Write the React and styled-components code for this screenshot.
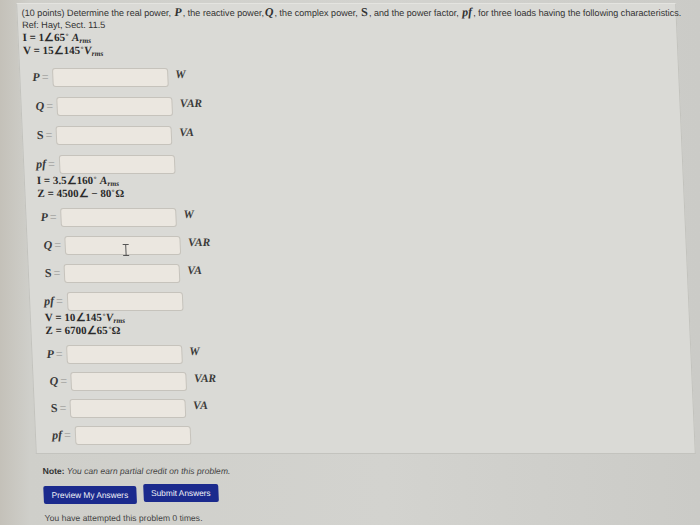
import React from "react";
import styled, { createGlobalStyle } from "styled-components";

const GlobalStyle = createGlobalStyle`
  html, body {
    margin: 0;
    padding: 0;
    height: 100%;
    overflow: hidden;
  }
  body {
    background: linear-gradient(90deg, #c4c1b9 0px, #cfcfca 30px, #d3d3cf 55%, #cbcbc7 100%);
    font-family: "Liberation Sans", Arial, sans-serif;
    color: #2f2f2f;
  }
`;

const Page = styled.div`
  width: 700px;
  height: 525px;
  box-sizing: border-box;
  padding: 3px 24px 0 16px;
  transform: skewX(2.5deg);
  transform-origin: 0 0;
`;

const Panel = styled.div`
  position: relative;
  border: 1px solid #c3c3be;
  border-top-color: #e4e4e0;
  background: #dadad6;
  padding: 3px 0 8px 4px;
  box-sizing: border-box;
`;

const Intro = styled.div`
  font-size: 9.2px;
  line-height: 12px;
  color: #333;
  white-space: nowrap;
  letter-spacing: -0.05px;
`;

const MathInline = styled.span`
  font-family: "Liberation Serif", "Times New Roman", serif;
  font-size: 12px;
  line-height: 0;
  font-weight: bold;
  font-style: ${(p) => (p.$italic ? "italic" : "normal")};
  margin: 0 1px;
`;

const Given = styled.div`
  font-family: "Liberation Serif", "Times New Roman", serif;
  font-size: 11px;
  font-weight: bold;
  line-height: 13px;
  height: 13px;
  padding-left: ${(p) => p.$indent || 0}px;
  color: #2a2a2a;
  white-space: nowrap;
`;

const Sub = styled.sub`
  font-size: 7.5px;
  font-style: italic;
  line-height: 0;
  vertical-align: -2px;
`;

const Sup = styled.sup`
  font-size: 7px;
  line-height: 0;
  vertical-align: 4px;
  font-weight: normal;
`;

const Row = styled.div`
  display: flex;
  align-items: center;
  height: 20px;
  margin-top: ${(p) => p.$top || 8}px;
  padding-left: ${(p) => p.$indent || 20}px;
`;

const Label = styled.span`
  font-family: "Liberation Serif", "Times New Roman", serif;
  font-size: 12px;
  font-weight: bold;
  font-style: ${(p) => (p.$bold ? "normal" : "italic")};
  color: #3a3a3a;
  white-space: nowrap;
  margin-right: 4px;

  b {
    font-style: normal;
    font-weight: normal;
    color: #8b8b88;
    margin-left: 2px;
  }
`;

const Field = styled.div`
  position: relative;
  width: 116px;
  height: 19px;
  box-sizing: border-box;
  background: #ebe7e0;
  border: 1px solid #c6c3bc;
  border-radius: 3px;
`;

const Unit = styled.span`
  font-family: "Liberation Serif", "Times New Roman", serif;
  font-size: 11.5px;
  font-style: italic;
  font-weight: bold;
  color: #3a3a3a;
  margin-left: 7px;
  align-self: flex-start;
  margin-top: 1px;
`;

const Cursor = styled.svg`
  position: absolute;
  left: 56px;
  top: 7px;
`;

const Footer = styled.div`
  padding: 12px 0 0 6px;
`;

const Note = styled.div`
  font-size: 8.6px;
  color: #333;
  b {
    font-weight: bold;
  }
  i {
    color: #444;
  }
`;

const Buttons = styled.div`
  display: flex;
  gap: 7px;
  margin-top: 10px;
  align-items: flex-start;
`;

const Button = styled.button`
  font-family: "Liberation Sans", Arial, sans-serif;
  font-size: 8.3px;
  color: #f2f2f8;
  background: #1b2a8d;
  border: none;
  border-radius: 2px;
  height: 18px;
  padding: 0 8px;
  margin-top: ${(p) => p.$raise || 0}px;
`;

const Attempts = styled.div`
  font-size: 8.6px;
  color: #444;
  margin-top: 9px;
`;

const Deg = () => <Sup>∘</Sup>;

const Field4 = ({ cursor }) => (
  <Field>
    {cursor && (
      <Cursor width="8" height="12" viewBox="0 0 8 12">
        <path d="M1 0.5h6M1 11.5h6M4 0.5v11" stroke="#555" strokeWidth="1" fill="none" />
      </Cursor>
    )}
  </Field>
);

const Answers = ({ indent, pfIndent, cursorRow, first, gap = 8 }) => (
  <>
    <Row $indent={indent} $top={first}>
      <Label>P<b>=</b></Label>
      <Field4 />
      <Unit>W</Unit>
    </Row>
    <Row $indent={indent + 2} $top={gap}>
      <Label>Q<b>=</b></Label>
      <Field4 cursor={cursorRow} />
      <Unit>VAR</Unit>
    </Row>
    <Row $indent={indent + 2} $top={gap}>
      <Label $bold>S<b>=</b></Label>
      <Field4 />
      <Unit>VA</Unit>
    </Row>
    <Row $indent={pfIndent} $top={gap}>
      <Label>pf<b>=</b></Label>
      <Field4 />
    </Row>
  </>
);

export default function App() {
  return (
    <>
      <GlobalStyle />
      <Page>
        <Panel>
          <Intro>
            (10 points) Determine the real power, <MathInline $italic>P</MathInline>, the reactive power,
            <MathInline $italic>Q</MathInline>, the complex power, <MathInline>S</MathInline>, and the power
            factor, <MathInline $italic>pf</MathInline>, for three loads having the following characteristics.
          </Intro>
          <Intro>Ref: Hayt, Sect. 11.5</Intro>
          <Given>
            I = 1∠65<Deg /> <i>A</i>
            <Sub>rms</Sub>
          </Given>
          <Given>
            V = 15∠145<Deg />
            <i>V</i>
            <Sub>rms</Sub>
          </Given>

          <Answers indent={8} pfIndent={8} first={10} gap={9} />

          <Given $indent={8}>
            I = 3.5∠160<Deg /> <i>A</i>
            <Sub>rms</Sub>
          </Given>
          <Given $indent={8}>Z = 4500∠ − 80<Deg />Ω</Given>

          <Answers indent={10} pfIndent={10} first={7} cursorRow />

          <Given $indent={10}>
            V = 10∠145<Deg />
            <i>V</i>
            <Sub>rms</Sub>
          </Given>
          <Given $indent={10}>Z = 6700∠65<Deg />Ω</Given>

          <Answers indent={10} pfIndent={12} first={7} gap={7} />
        </Panel>
        <Footer>
          <Note>
            <b>Note:</b> <i>You can earn partial credit on this problem.</i>
          </Note>
          <Buttons>
            <Button>Preview My Answers</Button>
            <Button $raise={-2}>Submit Answers</Button>
          </Buttons>
          <Attempts>You have attempted this problem 0 times.</Attempts>
        </Footer>
      </Page>
    </>
  );
}
